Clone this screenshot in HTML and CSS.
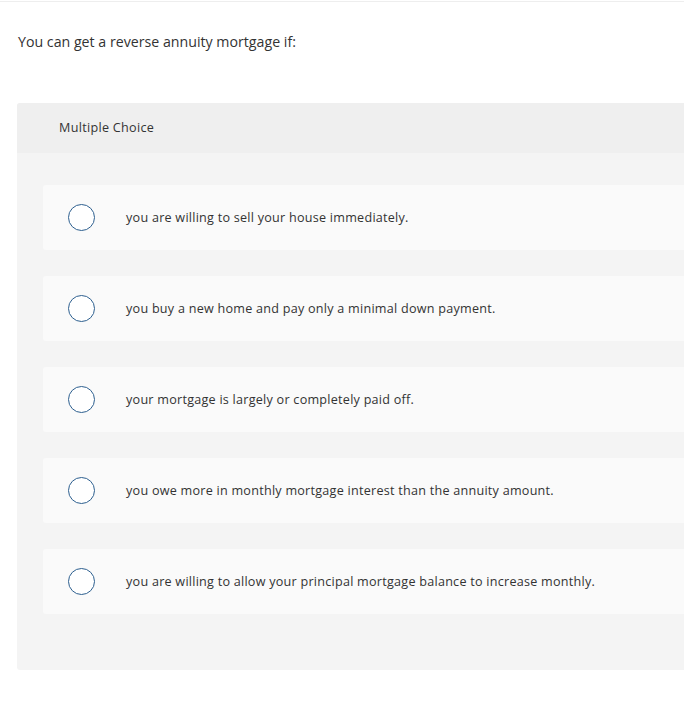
FILE: index.html
```html
<!DOCTYPE html>
<html lang="en">
<head>
<meta charset="utf-8">
<link rel="stylesheet" href="styles.css">
</head>
<body>
<div class="page">
  <p class="question">You can get a reverse annuity mortgage if:</p>
  <section class="panel">
    <header class="panel-head">Multiple Choice</header>
    <div class="options">
      <label class="option"><span class="radio"></span><span class="opt-text">you are willing to sell your house immediately.</span></label>
      <label class="option"><span class="radio"></span><span class="opt-text">you buy a new home and pay only a minimal down payment.</span></label>
      <label class="option"><span class="radio"></span><span class="opt-text">your mortgage is largely or completely paid off.</span></label>
      <label class="option"><span class="radio"></span><span class="opt-text">you owe more in monthly mortgage interest than the annuity amount.</span></label>
      <label class="option"><span class="radio"></span><span class="opt-text">you are willing to allow your principal mortgage balance to increase monthly.</span></label>
    </div>
  </section>
</div>
</body>
</html>
```

FILE: styles.css
```css
html, body {
  margin: 0;
  padding: 0;
  background: #fff;
  overflow: hidden;
}
body {
  font-family: "Open Sans", "Lato", sans-serif;
  color: #333;
}
.page {
  border-top: 1px solid #eeeeee;
  margin-top: 1px;
  padding: 0 0 0 17px;
}
.question {
  margin: 0;
  padding: 30px 0 0 1px;
  font-size: 14.2px;
  line-height: 20px;
  height: 71px;
  color: #333;
}
.panel {
  margin-right: -20px;
  background: #f4f4f4;
  border-radius: 3px;
  padding-bottom: 56px;
}
.panel-head {
  background: #efefef;
  height: 50px;
  line-height: 50px;
  padding-left: 42px;
  font-size: 12.6px;
  letter-spacing: 0.3px;
  color: #333;
  border-radius: 3px 3px 0 0;
}
.options {
  display: flex;
  flex-direction: column;
  gap: 26px;
  padding: 32px 0 0 26px;
}
.option {
  display: flex;
  align-items: center;
  height: 65px;
  background: #fafafa;
  border-radius: 3px;
  padding-left: 25px;
}
.radio {
  width: 25px;
  height: 25px;
  border: 1.5px solid #2d5f8f;
  border-radius: 50%;
  background: #fff;
  flex: none;
}
.opt-text {
  margin-left: 31px;
  font-size: 12.6px;
  letter-spacing: 0.25px;
  color: #333;
}
```
